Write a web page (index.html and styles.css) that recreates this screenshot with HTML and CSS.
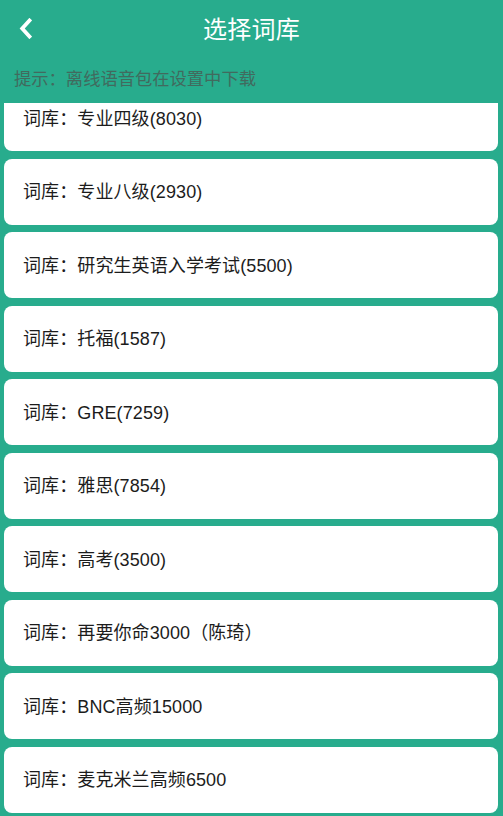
FILE: index.html
```html
<!DOCTYPE html>
<html lang="zh-CN">
<head>
<meta charset="utf-8">
<title>选择词库</title>
<link rel="stylesheet" href="styles.css">
</head>
<body>
<div class="page">
  <header class="header">
    <div class="titlebar">
      <span class="back">
        <svg width="13" height="21" viewBox="0 0 13 21"><path d="M10.5 2.5 L3.2 10.5 L10.5 18.5" fill="none" stroke="#fff" stroke-width="3.8" stroke-linecap="square" stroke-linejoin="miter"/></svg>
      </span>
      <h1 class="title">选择词库</h1>
    </div>
    <div class="hint">提示：离线语音包在设置中下载</div>
  </header>
  <div class="viewport">
    <ul class="list">
      <li class="card">词库：专业四级(8030)</li>
      <li class="card">词库：专业八级(2930)</li>
      <li class="card">词库：研究生英语入学考试(5500)</li>
      <li class="card">词库：托福(1587)</li>
      <li class="card">词库：GRE(7259)</li>
      <li class="card">词库：雅思(7854)</li>
      <li class="card">词库：高考(3500)</li>
      <li class="card">词库：再要你命3000（陈琦）</li>
      <li class="card">词库：BNC高频15000</li>
      <li class="card">词库：麦克米兰高频6500</li>
    </ul>
  </div>
</div>
</body>
</html>
```

FILE: styles.css
```css
* { box-sizing: border-box; }
html, body {
  margin: 0;
  padding: 0;
  background: #28ac8d;
  font-family: "Liberation Sans", "Noto Sans CJK SC", sans-serif;
}
.page {
  width: 503px;
  height: 816px;
  display: flex;
  flex-direction: column;
  overflow: hidden;
}
.header {
  flex: 0 0 103px;
  background: #28ac8d;
  position: relative;
  z-index: 1;
  display: flex;
  flex-direction: column;
}
.titlebar {
  height: 58px;
  display: flex;
  align-items: center;
  justify-content: center;
  position: relative;
  padding-bottom: 4px;
}
.back {
  position: absolute;
  left: 19px;
  top: 18px;
  width: 13px;
  height: 21px;
  display: flex;
}
.title {
  margin: 0;
  font-size: 24px;
  font-weight: normal;
  color: #ffffff;
  letter-spacing: 0.3px;
}
.hint {
  height: 45px;
  display: flex;
  align-items: center;
  padding-left: 14px;
  font-size: 17.3px;
  color: #416a5e;
  padding-bottom: 7px;
}
.viewport {
  flex: 1;
  overflow: hidden;
}
.list {
  list-style: none;
  margin: -18px 0 0;
  padding: 0 5px 0 4px;
  display: flex;
  flex-direction: column;
  gap: 7.5px;
}
.card {
  height: 66px;
  background: #ffffff;
  border-radius: 8px;
  display: flex;
  align-items: center;
  padding-left: 19px;
  padding-bottom: 3px;
  font-size: 18px;
  letter-spacing: 0.1px;
  color: #1c1c1c;
}
```
